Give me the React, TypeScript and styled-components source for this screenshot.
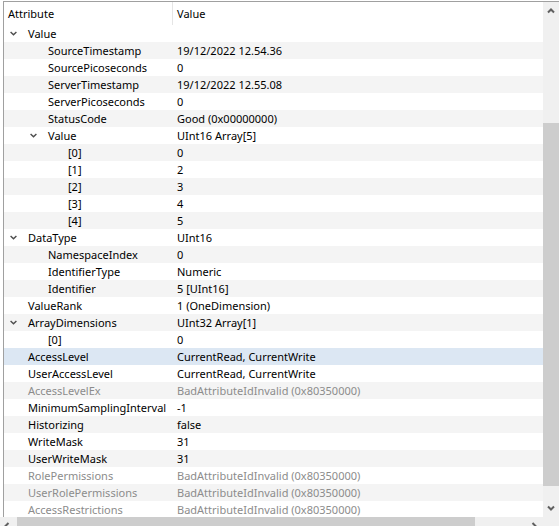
import React from "react";
import styled, { createGlobalStyle } from "styled-components";

const GlobalStyle = createGlobalStyle`
  html, body { margin: 0; padding: 0; background: #ffffff; }
  body {
    font-family: "Noto Sans", "Open Sans", "DejaVu Sans", sans-serif;
    font-size: 11px;
    color: #000000;
  }
`;

type Row = {
  label: string;
  value?: string;
  depth: number;
  open?: boolean;
  disabled?: boolean;
  selected?: boolean;
};

const BAD = "BadAttributeIdInvalid (0x80350000)";

const rows: Row[] = [
  { label: "Value", depth: 0, open: true },
  { label: "SourceTimestamp", value: "19/12/2022 12.54.36", depth: 1 },
  { label: "SourcePicoseconds", value: "0", depth: 1 },
  { label: "ServerTimestamp", value: "19/12/2022 12.55.08", depth: 1 },
  { label: "ServerPicoseconds", value: "0", depth: 1 },
  { label: "StatusCode", value: "Good (0x00000000)", depth: 1 },
  { label: "Value", value: "UInt16 Array[5]", depth: 1, open: true },
  { label: "[0]", value: "0", depth: 2 },
  { label: "[1]", value: "2", depth: 2 },
  { label: "[2]", value: "3", depth: 2 },
  { label: "[3]", value: "4", depth: 2 },
  { label: "[4]", value: "5", depth: 2 },
  { label: "DataType", value: "UInt16", depth: 0, open: true },
  { label: "NamespaceIndex", value: "0", depth: 1 },
  { label: "IdentifierType", value: "Numeric", depth: 1 },
  { label: "Identifier", value: "5 [UInt16]", depth: 1 },
  { label: "ValueRank", value: "1 (OneDimension)", depth: 0 },
  { label: "ArrayDimensions", value: "UInt32 Array[1]", depth: 0, open: true },
  { label: "[0]", value: "0", depth: 1 },
  { label: "AccessLevel", value: "CurrentRead, CurrentWrite", depth: 0, selected: true },
  { label: "UserAccessLevel", value: "CurrentRead, CurrentWrite", depth: 0 },
  { label: "AccessLevelEx", value: BAD, depth: 0, disabled: true },
  { label: "MinimumSamplingInterval", value: "-1", depth: 0 },
  { label: "Historizing", value: "false", depth: 0 },
  { label: "WriteMask", value: "31", depth: 0 },
  { label: "UserWriteMask", value: "31", depth: 0 },
  { label: "RolePermissions", value: BAD, depth: 0, disabled: true },
  { label: "UserRolePermissions", value: BAD, depth: 0, disabled: true },
  { label: "AccessRestrictions", value: BAD, depth: 0, disabled: true },
];

const Root = styled.div`
  width: 559px;
  height: 526px;
  overflow: hidden;
  display: flex;
  flex-direction: column;
  background: #ffffff;
`;

const Frame = styled.div`
  flex: none;
  margin: 1px 0 0 3px;
  height: 516px;
  box-sizing: border-box;
  border-top: 1px solid #a0a0a0;
  border-left: 1px solid #a0a0a0;
  display: grid;
  grid-template-columns: 1fr 16px;
`;

const List = styled.div`
  overflow: hidden;
  display: flex;
  flex-direction: column;
`;

const Header = styled.div`
  flex: none;
  display: grid;
  grid-template-columns: 169px 1fr;
  height: 23px;
`;

const HeaderCell = styled.div<{ $sep?: boolean }>`
  display: flex;
  align-items: center;
  padding-left: 4px;
  border-right: ${(p) => (p.$sep ? "1px solid #e5e5e5" : "none")};
  white-space: nowrap;
`;

const RowLine = styled.div<{ $striped: boolean; $selected?: boolean }>`
  flex: none;
  display: grid;
  grid-template-columns: 169px 1fr;
  height: 17px;
  background: ${(p) => (p.$selected ? "#dce7f3" : p.$striped ? "#f4f4f4" : "#ffffff")};
`;

const TreeCell = styled.div<{ $depth: number; $disabled?: boolean }>`
  display: flex;
  align-items: center;
  padding-left: ${(p) => p.$depth * 20}px;
  color: ${(p) => (p.$disabled ? "#8c8c8c" : "#000000")};
  white-space: nowrap;
  overflow: hidden;
`;

const Toggle = styled.span`
  flex: none;
  width: 24px;
  height: 17px;
  display: flex;
  align-items: center;
  padding-left: 6px;
  box-sizing: border-box;
`;

const ValueCell = styled.div<{ $disabled?: boolean }>`
  display: flex;
  align-items: center;
  padding-left: 4px;
  color: ${(p) => (p.$disabled ? "#8c8c8c" : "#000000")};
  white-space: nowrap;
  overflow: hidden;
`;

const VScroll = styled.div`
  background: #f0f0f0;
  display: flex;
  flex-direction: column;
`;

const ArrowBtn = styled.div<{ $w?: number; $h?: number; $pad?: number }>`
  flex: none;
  width: ${(p) => (p.$w ? `${p.$w}px` : "auto")};
  height: ${(p) => (p.$h ? `${p.$h}px` : "auto")};
  display: flex;
  align-items: center;
  justify-content: ${(p) => (p.$pad !== undefined ? "flex-start" : "center")};
  padding-left: ${(p) => p.$pad ?? 0}px;
  box-sizing: border-box;
`;

const Gap = styled.div<{ $size?: number; $horizontal?: boolean }>`
  flex: ${(p) => (p.$size !== undefined ? "none" : "1")};
  ${(p) =>
    p.$size !== undefined
      ? p.$horizontal
        ? `width: ${p.$size}px;`
        : `height: ${p.$size}px;`
      : ""}
`;

const VThumb = styled.div`
  flex: none;
  height: 363px;
  background: #cdcdcd;
`;

const HScroll = styled.div`
  flex: none;
  height: 17px;
  display: flex;
  background: #f0f0f0;
`;

const HThumb = styled.div`
  flex: none;
  width: 458px;
  background: #cdcdcd;
`;

const Corner = styled.div`
  flex: none;
  width: 16px;
  background: #f0f0f0;
`;

const Chevron = () => (
  <svg width="7" height="5" viewBox="0 0 7 5" aria-hidden="true">
    <polyline points="0.6,0.9 3.5,3.8 6.4,0.9" fill="none" stroke="#4d4d4d" strokeWidth="1.4" />
  </svg>
);

const ScrollArrow = ({ dir }: { dir: "up" | "down" | "left" | "right" }) => {
  const pts: Record<string, string> = {
    up: "1,5.5 4,2.5 7,5.5",
    down: "1,1.5 4,4.5 7,1.5",
    left: "5.5,1 2.5,4 5.5,7",
    right: "1.5,1 4.5,4 1.5,7",
  };
  const vertical = dir === "up" || dir === "down";
  return (
    <svg
      width={vertical ? 8 : 7}
      height={vertical ? 7 : 8}
      viewBox={vertical ? "0 0 8 7" : "0 0 7 8"}
      aria-hidden="true"
    >
      <polyline points={pts[dir]} fill="none" stroke="#606060" strokeWidth="2" />
    </svg>
  );
};

export default function App() {
  return (
    <>
      <GlobalStyle />
      <Root>
        <Frame>
          <List>
            <Header>
              <HeaderCell $sep>Attribute</HeaderCell>
              <HeaderCell>Value</HeaderCell>
            </Header>
            {rows.map((r, i) => (
              <RowLine key={i} $striped={i % 2 === 1} $selected={r.selected}>
                <TreeCell $depth={r.depth} $disabled={r.disabled}>
                  <Toggle>{r.open ? <Chevron /> : null}</Toggle>
                  {r.label}
                </TreeCell>
                <ValueCell $disabled={r.disabled}>{r.value ?? ""}</ValueCell>
              </RowLine>
            ))}
          </List>
          <VScroll>
            <ArrowBtn $h={17}>
              <ScrollArrow dir="up" />
            </ArrowBtn>
            <Gap $size={104} />
            <VThumb />
            <Gap />
            <ArrowBtn $h={17}>
              <ScrollArrow dir="down" />
            </ArrowBtn>
          </VScroll>
        </Frame>
        <HScroll>
          <ArrowBtn $w={17} $pad={3}>
            <ScrollArrow dir="left" />
          </ArrowBtn>
          <HThumb />
          <Gap />
          <ArrowBtn $w={17}>
            <ScrollArrow dir="right" />
          </ArrowBtn>
          <Corner />
        </HScroll>
      </Root>
    </>
  );
}
